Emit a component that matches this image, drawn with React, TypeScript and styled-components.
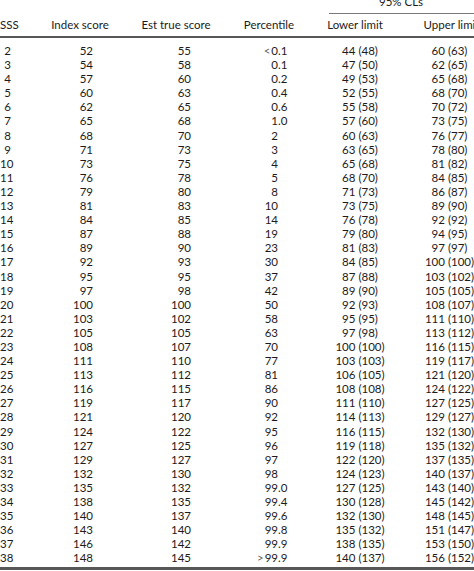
import React from "react";
import styled, { createGlobalStyle } from "styled-components";

const GlobalStyle = createGlobalStyle`
  html, body {
    margin: 0;
    padding: 0;
    background: #ffffff;
  }
  body {
    width: 474px;
    height: 571px;
    overflow: hidden;
    font-family: Lato, "Open Sans", "DejaVu Sans", sans-serif;
    color: #1c1a1b;
  }
`;

const COLUMNS = "40px 90px 100px 90px 85px 95px";

const Frame = styled.div`
  width: 474px;
  height: 571px;
  overflow: hidden;
`;

const Table = styled.div`
  width: 500px;
  margin-top: -5px;
  display: flex;
  flex-direction: column;
  font-size: 11.5px;
`;

const Row = styled.div`
  display: grid;
  grid-template-columns: ${COLUMNS};
`;

const GroupRow = styled(Row)``;

const GroupCell = styled.div`
  grid-column: 5 / span 2;
  margin-left: 9px;
  padding: 0 27px 4px 0;
  line-height: 14px;
  text-align: center;
  border-bottom: 1px solid #7a7a7a;
`;

const HeadRow = styled(Row)`
  padding: 4px 0;
  border-bottom: 2px solid #575757;
`;

const Cell = styled.div<{ $align: "left" | "right" | "center"; $pr: number }>`
  text-align: ${(p) => p.$align};
  padding-right: ${(p) => p.$pr}px;
  white-space: nowrap;
`;

const HeadCell = styled(Cell)`
  line-height: 14px;
`;

const Body = styled.div`
  padding: 6px 0 2px;
  border-bottom: 3px solid #575757;
`;

const BodyRow = styled(Row)`
  height: 14.1px;
  line-height: 14.1px;
`;

const Pct = styled.div`
  display: grid;
  grid-template-columns: 48px 1fr;
  white-space: nowrap;
`;

const PctInt = styled.span`
  text-align: right;
`;

const PctFrac = styled.span`
  text-align: left;
`;

const Sign = styled.span`
  color: #666;
  margin-right: 1px;
`;

type Align = "left" | "right" | "center";

const headers: { label: string; align: Align; pr: number }[] = [
  { label: "SSS", align: "left", pr: 0 },
  { label: "Index score", align: "center", pr: 10 },
  { label: "Est true score", align: "center", pr: 8 },
  { label: "Percentile", align: "center", pr: 12 },
  { label: "Lower limit", align: "center", pr: 15 },
  { label: "Upper limit", align: "center", pr: 2 },
];

const body: { align: Align; pr: number }[] = [
  { align: "right", pr: 29 },
  { align: "right", pr: 37 },
  { align: "right", pr: 39 },
  { align: "right", pr: 0 },
  { align: "center", pr: 5 },
  { align: "center", pr: 6 },
];

const rows: string[][] = [
  ["2", "52", "55", "<0.1", "44 (48)", "60 (63)"],
  ["3", "54", "58", "0.1", "47 (50)", "62 (65)"],
  ["4", "57", "60", "0.2", "49 (53)", "65 (68)"],
  ["5", "60", "63", "0.4", "52 (55)", "68 (70)"],
  ["6", "62", "65", "0.6", "55 (58)", "70 (72)"],
  ["7", "65", "68", "1.0", "57 (60)", "73 (75)"],
  ["8", "68", "70", "2", "60 (63)", "76 (77)"],
  ["9", "71", "73", "3", "63 (65)", "78 (80)"],
  ["10", "73", "75", "4", "65 (68)", "81 (82)"],
  ["11", "76", "78", "5", "68 (70)", "84 (85)"],
  ["12", "79", "80", "8", "71 (73)", "86 (87)"],
  ["13", "81", "83", "10", "73 (75)", "89 (90)"],
  ["14", "84", "85", "14", "76 (78)", "92 (92)"],
  ["15", "87", "88", "19", "79 (80)", "94 (95)"],
  ["16", "89", "90", "23", "81 (83)", "97 (97)"],
  ["17", "92", "93", "30", "84 (85)", "100 (100)"],
  ["18", "95", "95", "37", "87 (88)", "103 (102)"],
  ["19", "97", "98", "42", "89 (90)", "105 (105)"],
  ["20", "100", "100", "50", "92 (93)", "108 (107)"],
  ["21", "103", "102", "58", "95 (95)", "111 (110)"],
  ["22", "105", "105", "63", "97 (98)", "113 (112)"],
  ["23", "108", "107", "70", "100 (100)", "116 (115)"],
  ["24", "111", "110", "77", "103 (103)", "119 (117)"],
  ["25", "113", "112", "81", "106 (105)", "121 (120)"],
  ["26", "116", "115", "86", "108 (108)", "124 (122)"],
  ["27", "119", "117", "90", "111 (110)", "127 (125)"],
  ["28", "121", "120", "92", "114 (113)", "129 (127)"],
  ["29", "124", "122", "95", "116 (115)", "132 (130)"],
  ["30", "127", "125", "96", "119 (118)", "135 (132)"],
  ["31", "129", "127", "97", "122 (120)", "137 (135)"],
  ["32", "132", "130", "98", "124 (123)", "140 (137)"],
  ["33", "135", "132", "99.0", "127 (125)", "143 (140)"],
  ["34", "138", "135", "99.4", "130 (128)", "145 (142)"],
  ["35", "140", "137", "99.6", "132 (130)", "148 (145)"],
  ["36", "143", "140", "99.8", "135 (132)", "151 (147)"],
  ["37", "146", "142", "99.9", "138 (135)", "153 (150)"],
  ["38", "148", "145", ">99.9", "140 (137)", "156 (152)"],
];

// split a percentile so the decimal points line up
const Percentile = ({ value }: { value: string }) => {
  const sign = value[0] === "<" || value[0] === ">" ? value[0] : "";
  const rest = sign ? value.slice(1) : value;
  const [int, frac] = rest.split(".");
  return (
    <Pct>
      <PctInt>
        {sign && <Sign>{sign}</Sign>}
        {int}
      </PctInt>
      <PctFrac>{frac !== undefined ? "." + frac : ""}</PctFrac>
    </Pct>
  );
};

const App = () => {
  return (
    <Frame>
      <GlobalStyle />
      <Table>
        <GroupRow>
          <GroupCell>95% CLs</GroupCell>
        </GroupRow>
        <HeadRow>
          {headers.map((h) => (
            <HeadCell key={h.label} $align={h.align} $pr={h.pr}>
              {h.label}
            </HeadCell>
          ))}
        </HeadRow>
        <Body>
          {rows.map((r) => (
            <BodyRow key={r[0]}>
              {r.map((v, i) =>
                i === 3 ? (
                  <Percentile key={i} value={v} />
                ) : (
                  <Cell key={i} $align={body[i].align} $pr={body[i].pr}>
                    {v}
                  </Cell>
                )
              )}
            </BodyRow>
          ))}
        </Body>
      </Table>
    </Frame>
  );
};

export default App;
